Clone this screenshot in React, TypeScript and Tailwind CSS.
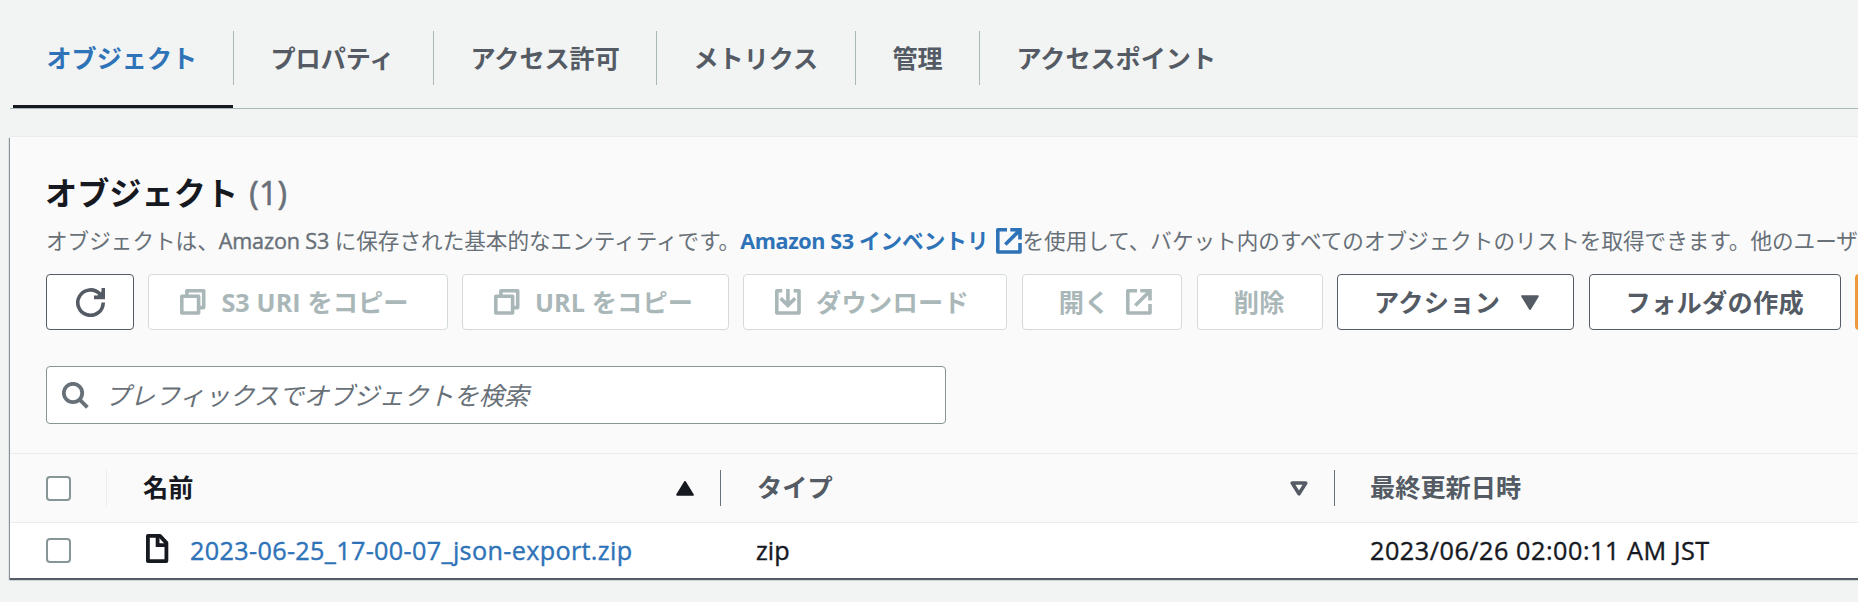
import React from "react";
import clsx from "clsx";

const tabs = [
  { label: "オブジェクト", width: "w-[220px]" },
  { label: "プロパティ", width: "w-[200px]" },
  { label: "アクセス許可", width: "w-[223px]" },
  { label: "メトリクス", width: "w-[199px]" },
  { label: "管理", width: "w-[124px]" },
  { label: "アクセスポイント", width: "w-[274px]" },
];

function RefreshIcon() {
  return (
    <svg width="29" height="29" viewBox="0 0 29 29" fill="none" stroke="currentColor" strokeWidth="3.6">
      <path d="M27.2 14.6A12.7 12.7 0 1 1 24 6.2" />
      <path d="M18 9.4h9.3V0" />
      <path d="M20 9.4L27 2v7.4z" fill="currentColor" stroke="none" />
    </svg>
  );
}

function CopyIcon() {
  return (
    <svg width="26" height="26" viewBox="0 0 26 26" fill="none" stroke="currentColor" strokeWidth="3.6" strokeLinejoin="round">
      <path d="M1.8 7.2h16.8v16.8H1.8z" />
      <path d="M6.9 7V1.8h16.8v16.8h-5" />
    </svg>
  );
}

function DownloadIcon() {
  return (
    <svg width="26" height="26" viewBox="0 0 26 26" fill="none" stroke="currentColor" strokeWidth="3.6">
      <path d="M7.2 1.8H1.8v22.2h22.2V1.8h-5.4" strokeLinejoin="round" />
      <path d="M12.9 0v16.5M5.6 9.2l7.3 7.2 7.3-7.2" />
    </svg>
  );
}

function ExternalIcon() {
  return (
    <svg width="26" height="26" viewBox="0 0 26 26" fill="none" stroke="currentColor" strokeWidth="3.6">
      <path d="M11 1.8H1.8v22.2h22.2v-9" strokeLinejoin="round" />
      <path d="M14.3 1.8h9.7v9.7M9.3 16.6L24 1.9" />
    </svg>
  );
}

function SearchIcon() {
  return (
    <svg width="27" height="27" viewBox="0 0 27 27" fill="none" stroke="currentColor" strokeWidth="3.8">
      <circle cx="11" cy="11" r="9.2" />
      <path d="M17.4 17.4l8 8" />
    </svg>
  );
}

function FileIcon() {
  return (
    <svg width="23" height="29" viewBox="0 0 23 29" fill="none" stroke="currentColor" strokeWidth="3.8" strokeLinejoin="round">
      <path d="M1.9 1.9h12l6.5 7v18.2H1.9z" />
      <path d="M11.6 2v9.2h8.8" strokeLinejoin="miter" />
    </svg>
  );
}

function Triangle({ className, hollow }: { className?: string; hollow?: boolean }) {
  return (
    <svg
      className={className}
      width="18"
      height="15"
      viewBox="0 0 18 15"
      fill={hollow ? "none" : "currentColor"}
      stroke="currentColor"
      strokeWidth={hollow ? 3.5 : 2}
      strokeLinejoin="round"
    >
      {hollow ? <path d="M2.2 2h13.6L9 12.8z" /> : <path d="M1.2 1.2h15.6L9 14z" />}
    </svg>
  );
}

function Button({
  width,
  disabled,
  children,
}: {
  width: string;
  disabled?: boolean;
  children: React.ReactNode;
}) {
  return (
    <button
      disabled={disabled}
      className={clsx(
        "flex h-14 shrink-0 items-center whitespace-nowrap rounded-[4px] border bg-white pl-[31px] font-bold tracking-[0.3px]",
        disabled ? "border-[#d5dbdb] text-[#aab7b8]" : "border-[#545b64] text-[#545b64]",
        width
      )}
    >
      {children}
    </button>
  );
}

function Checkbox() {
  return <span className="block size-[25px] rounded-[4px] border-2 border-[#879596] bg-white" />;
}

export default function App() {
  return (
    <div className="h-[602px] w-full overflow-hidden bg-[#f2f3f3] font-['Open_Sans','Noto_Sans_CJK_JP',sans-serif] text-[25.2px] leading-9 text-[#16191f]">
      {/* tabs */}
      <nav className="ml-2.5 flex h-[109px] w-[1848px] border-b border-[#aab7b8] pl-[3px] text-[25.1px]">
        {tabs.map((tab, i) => (
          <div
            key={tab.label}
            className={clsx(
              "flex shrink-0 pt-[31px]",
              tab.width,
              i === 0 && "border-b-[3px] border-[#16191f]"
            )}
          >
            <span
              className={clsx(
                "flex h-[54px] w-full items-center whitespace-nowrap font-bold",
                i === 0
                  ? "pl-[33.5px] text-[#2e73b8]"
                  : "border-l border-[#aab7b8] pl-[36.5px] text-[#545b64]"
              )}
            >
              {tab.label}
            </span>
          </div>
        ))}
      </nav>

      {/* objects panel */}
      <main className="ml-2.5 mt-[27px] h-[442px] w-[1870px] border-t border-[#eaeded] bg-[#fafafa] shadow-[0_1px_0_#545b64,0_2px_1px_rgba(0,28,36,0.45),-1px_2px_1px_rgba(0,28,36,0.4)]">
        <div className="h-[316px] pl-9 pt-[34px]">
          <h2 className="flex h-11 items-center gap-[11px] text-[32.2px] font-bold">
            <span className="-ml-px">オブジェクト</span>
            <span className="font-normal tracking-[0.3px] text-[#687078] [-webkit-text-stroke:0.6px]">(1)</span>
          </h2>

          <p className="flex h-[30px] items-center whitespace-nowrap pt-[22px] text-[21.6px] text-[#687078]">
            オブジェクトは、
            <span className="whitespace-pre tracking-[-0.15px] [-webkit-text-stroke:0.4px]">Amazon S3 </span>
            に保存された基本的なエンティティです。
            <a className="flex items-center font-bold text-[#2e73b8]">
              <span className="whitespace-pre tracking-[-0.4px]">Amazon S3 </span>
              <span className="mr-2">インベントリ</span>
              <ExternalIcon />
            </a>
            を使用して、バケット内のすべてのオブジェクトのリストを取得できます。他のユーザー
          </p>

          <div className="mt-[29px] flex gap-[14.4px]">
            <Button width="w-[88px]">
              <span className="-ml-0.5">
                <RefreshIcon />
              </span>
            </Button>
            <Button width="w-[299.2px]" disabled>
              <CopyIcon />
              <span className="ml-[15px] tracking-[0.1px]">S3 URI をコピー</span>
            </Button>
            <Button width="w-[266.6px]" disabled>
              <CopyIcon />
              <span className="ml-[15px] tracking-[0.1px]">URL をコピー</span>
            </Button>
            <Button width="w-[264.4px]" disabled>
              <DownloadIcon />
              <span className="ml-[15px]">ダウンロード</span>
            </Button>
            <Button width="w-[160.6px]" disabled>
              <span className="ml-[5px] mr-4">開く</span>
              <ExternalIcon />
            </Button>
            <Button width="w-[126px]" disabled>
              <span className="ml-[5px]">削除</span>
            </Button>
            <Button width="w-[237px]">
              <span className="ml-[5px] mr-[21px]">アクション</span>
              <Triangle />
            </Button>
            <Button width="w-[252px]">
              <span className="ml-[5px]">フォルダの作成</span>
            </Button>
            <button className="h-14 w-40 shrink-0 rounded-[4px] bg-[#ec9a3c]" />
          </div>

          <div className="mt-9 flex h-[58px] w-[900px] items-center gap-4 rounded-[4px] border border-[#879596] bg-white pl-[15px] text-[25px] text-[#687078]">
            <SearchIcon />
            <span className="italic">プレフィックスでオブジェクトを検索</span>
          </div>
        </div>

        {/* table header */}
        <div className="flex h-[70px] items-center border-y border-[#eaeded] font-bold text-[#545b64]">
          <div className="flex h-9 w-[97px] items-center border-r border-[#eaeded] pl-9">
            <Checkbox />
          </div>
          <div className="flex h-9 w-[614px] items-center justify-between border-r border-[#687078] pl-9 pr-[26px] text-[#16191f]">
            <span className="pb-0.5">名前</span>
            <Triangle className="rotate-180" />
          </div>
          <div className="flex h-9 w-[614px] items-center justify-between border-r border-[#687078] pl-9 pr-[26px]">
            <span className="pb-0.5">タイプ</span>
            <Triangle hollow />
          </div>
          <div className="pb-0.5 pl-[35px]">最終更新日時</div>
        </div>

        {/* table row */}
        <div className="flex h-[55px] items-center bg-white [-webkit-text-stroke:0.4px]">
          <div className="w-[97px] pl-9">
            <Checkbox />
          </div>
          <div className="flex w-[614px] items-center pl-[39px]">
            <span className="pb-1">
              <FileIcon />
            </span>
            <a className="ml-[21px] pb-0.5 tracking-[0.34px] text-[#2e73b8]">
              2023-06-25_17-00-07_json-export.zip
            </a>
          </div>
          <div className="w-[614px] pb-0.5 pl-[35px]">zip</div>
          <div className="pb-0.5 pl-[35px] tracking-[0.53px]">2023/06/26 02:00:11 AM JST</div>
        </div>
      </main>
    </div>
  );
}
